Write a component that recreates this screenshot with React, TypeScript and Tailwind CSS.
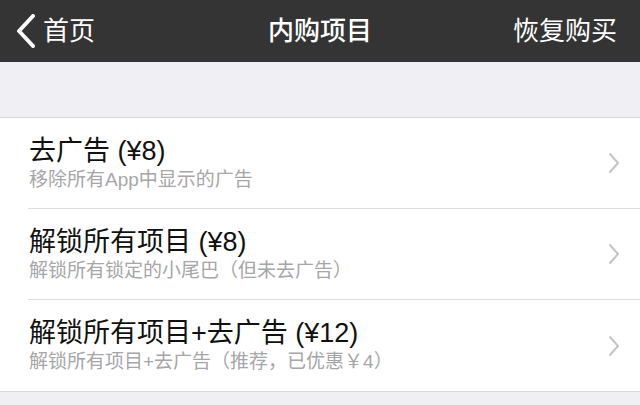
import React from "react";

type Item = { title: string; desc: string };

const items: Item[] = [
  { title: "去广告 (¥8)", desc: "移除所有App中显示的广告" },
  { title: "解锁所有项目 (¥8)", desc: "解锁所有锁定的小尾巴（但未去广告）" },
  { title: "解锁所有项目+去广告 (¥12)", desc: "解锁所有项目+去广告（推荐，已优惠￥4）" },
];

const font = {
  fontFamily: '"Liberation Sans", "Noto Sans CJK SC", "Noto Sans", sans-serif',
};

function BackArrow() {
  return (
    <svg width="22" height="34" viewBox="0 0 22 34" fill="none">
      <path d="M18 2 L4 17 L18 32" stroke="#fff" strokeWidth="4" strokeLinecap="round" strokeLinejoin="round" />
    </svg>
  );
}

function Chevron() {
  return (
    <svg width="12" height="22" viewBox="0 0 12 22" fill="none">
      <path d="M2 2 L10 11 L2 20" stroke="#c4c4c8" strokeWidth="2" strokeLinecap="round" strokeLinejoin="round" />
    </svg>
  );
}

export default function App() {
  return (
    <div className="w-[640px] h-[405px] overflow-hidden bg-[#efeff4]" style={font}>
      <header className="h-[62px] bg-[#343434] grid grid-cols-[1fr_auto_1fr] items-center text-white text-[26px] leading-none">
        <div className="flex items-center pl-[15px] gap-[6px]">
          <BackArrow />
          <span>首页</span>
        </div>
        <div className="font-medium">内购项目</div>
        <div className="flex justify-end pr-[23px]">恢复购买</div>
      </header>

      <div className="h-[56px] border-b border-[#d9d9dd]" />

      <ul className="bg-white border-b border-[#d9d9dd]">
        {items.map((it, i) => (
          <li key={i} className="pl-[28px]">
            <div className={"h-[91px] flex items-center pr-[20px] " + (i < items.length - 1 ? "border-b border-[#dcdcdf]" : "")}>
              <div className="flex-1 pl-[1px]">
                <div className="text-[27px] leading-[30px] text-[#111]">{it.title}</div>
                <div className="mt-[3px] text-[19px] leading-[22px] text-[#a6a6a8]">{it.desc}</div>
              </div>
              <Chevron />
            </div>
          </li>
        ))}
      </ul>
    </div>
  );
}
